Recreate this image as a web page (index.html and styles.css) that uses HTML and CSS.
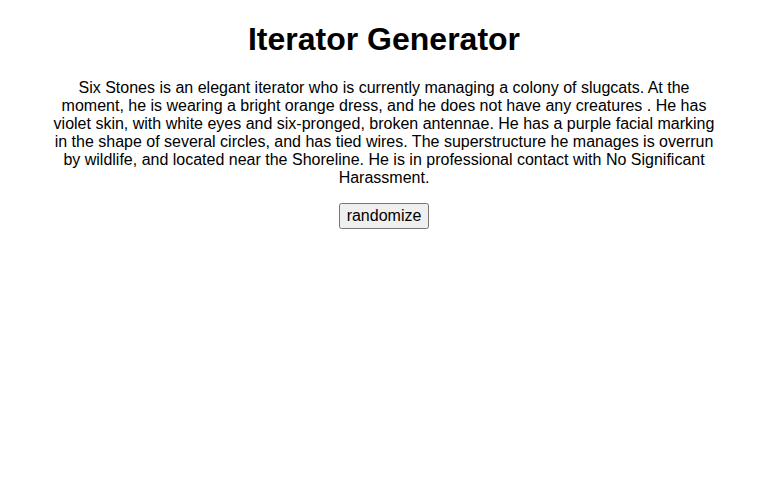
FILE: index.html
```html
<!DOCTYPE html>
<html lang="en">
<head>
    <meta charset="UTF-8">
    <meta name="viewport" content="width=device-width, initial-scale=1.0">
    <title>Iterator Generator</title>
    <link rel="stylesheet" href="styles.css">
</head>
<body>
    <div class="container">
        <h1 class="title">Iterator Generator</h1>
        <p id="description">Six Stones is an elegant iterator who is currently managing a colony of slugcats. At the moment, he is wearing a bright orange dress, and he does not have any creatures . He has violet skin, with white eyes and six-pronged, broken antennae. He has a purple facial marking in the shape of several circles, and has tied wires. The superstructure he manages is overrun by wildlife, and located near the Shoreline. He is in professional contact with No Significant Harassment.</p>
        <button id="randomize">randomize</button>
    </div>
</body>
</html>
```

FILE: styles.css
```css
body {
    font-family: 'Liberation Sans', Arial, sans-serif;
    margin: 8px;
    background: white;
    color: black;
}

.container {
    text-align: center;
}

.title {
    font-size: 2em;
    margin: 13px 0 21px;
}

#description {
    font-size: 16px;
    line-height: 18px;
    max-width: 664px;
    margin: 0 auto 16px;
}

#randomize {
    font-family: inherit;
    font-size: 16px;
    padding: 2px 6px;
}
```
